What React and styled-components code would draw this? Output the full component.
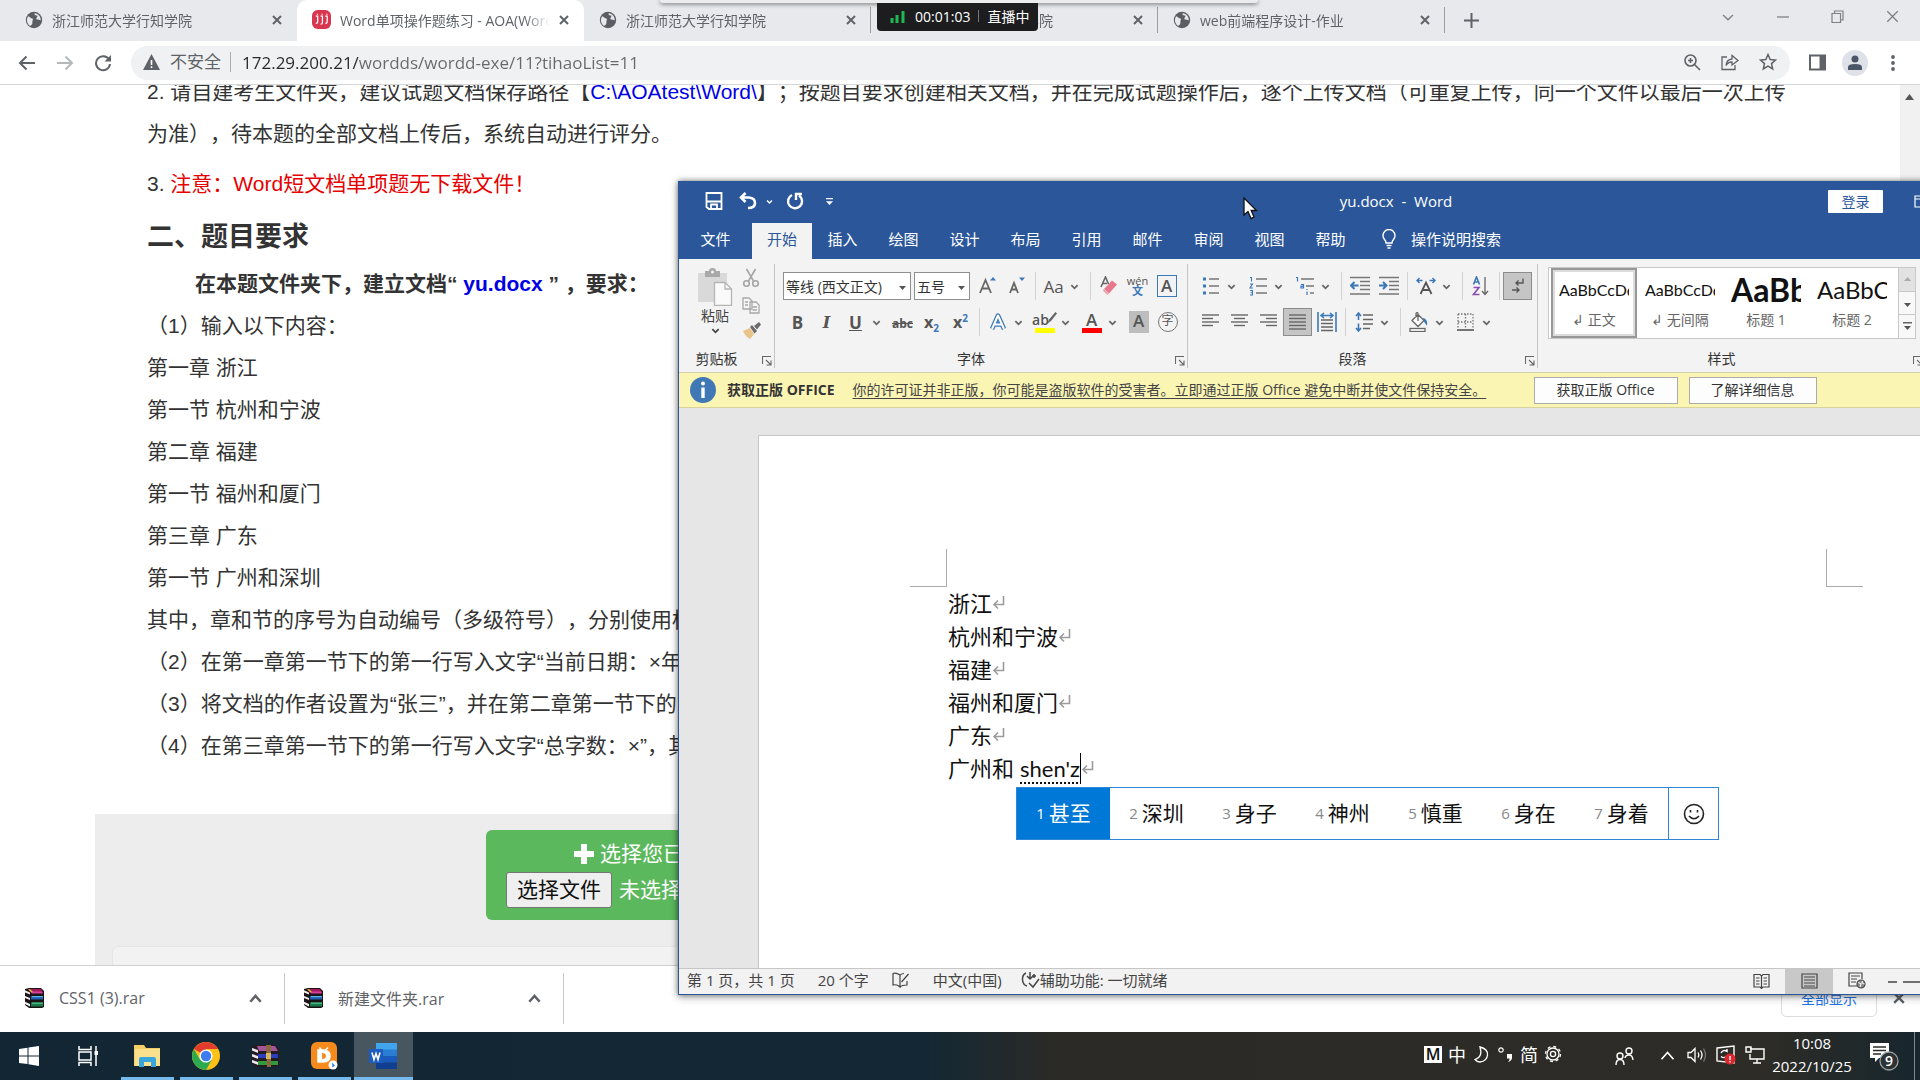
import React, { useState } from 'react'
import styled, { createGlobalStyle, css } from 'styled-components'

const uiFont = `'Open Sans', 'Noto Sans CJK SC', sans-serif`
const pageFont = `'Liberation Sans', 'Noto Sans CJK SC', sans-serif`
const docFont = `Lato, 'Noto Sans CJK SC', sans-serif`

const GlobalStyle = createGlobalStyle`
    * {
        box-sizing: border-box;
    }
    body {
        margin: 0;
        overflow: hidden;
        font-family: ${uiFont};
        text-spacing-trim: space-all;
    }
    button, input, select {
        font: inherit;
        color: inherit;
        margin: 0;
        padding: 0;
        border: 0;
        background: none;
    }
    svg {
        display: block;
        flex: none;
    }
    p, h2 {
        margin: 0;
    }
`

const Desktop = styled.div`
    position: relative;
    height: 100vh;
    display: flex;
    flex-direction: column;
    overflow: hidden;
    background: #fff;
`

/* ---------- browser ---------- */

const TabStrip = styled.div`
    height: 41px;
    flex: none;
    display: flex;
    align-items: stretch;
    padding-left: 10px;
    background: #e8e9ed;
`

const Tab = styled.div`
    width: 287px;
    display: flex;
    align-items: center;
    gap: 9px;
    padding: 0 14px 2px 15px;
    font-size: 14px;
    color: #5f6368;
    border-right: 1px solid ${p => (p.$line ? '#9a9da1' : 'transparent')};
    border-image: ${p => (p.$line ? 'linear-gradient(transparent 8px, #9a9da1 8px, #9a9da1 32px, transparent 32px) 1' : 'none')};
    ${p => p.$active && css`
        background: #fff;
        border-radius: 10px 10px 0 0;
    `}
`

const TabTitle = styled.button`
    flex: 1;
    min-width: 0;
    overflow: hidden;
    text-align: left;
    white-space: nowrap;
    mask-image: linear-gradient(to right, #000 88%, transparent);
`

const IconButton = styled.button`
    display: flex;
    align-items: center;
    justify-content: center;
    flex: none;
    width: ${p => p.$w || 'auto'};
    color: #5f6368;
`

const WindowControls = styled.div`
    margin-left: auto;
    display: flex;
    padding: 0 0 8px;
    & > button {
        color: #7d8084;
    }
`

const Toolbar = styled.div`
    height: 44px;
    flex: none;
    display: flex;
    align-items: center;
    padding: 0 8px;
    border-bottom: 1px solid #d5d6d8;
    background: #fff;
`

const Omnibox = styled.div`
    flex: 1;
    height: 34px;
    display: flex;
    align-items: center;
    margin: 0 8px 0 9px;
    padding: 0 3px 1px 12px;
    border-radius: 17px;
    background: #eff1f2;
    font-size: 17px;
    color: #5f6368;
`

const NotSecure = styled.span`
    margin-left: 10px;
    padding-right: 9px;
    line-height: 20px;
    border-right: 1px solid #a9acb0;
`

const Address = styled.input`
    flex: 1;
    margin-left: 11px;
    outline: 0;
    color: #333;
    background: linear-gradient(to right, #26282b 117px, #65696d 117px);
    background-clip: text;
    -webkit-text-fill-color: transparent;
`

const Avatar = styled.span`
    width: 26px;
    height: 26px;
    display: flex;
    align-items: center;
    justify-content: center;
    border-radius: 50%;
    background: #dfe1e8;
`

const Viewport = styled.main`
    flex: 1;
    min-height: 0;
    display: flex;
    overflow: hidden;
`

const Page = styled.div`
    flex: 1;
    padding: 0 95px;
    font-family: ${pageFont};
    font-size: 21px;
    line-height: 42px;
    color: #333;
`

const Article = styled.article`
    margin-top: -14px;
    padding: 0 16px 0 52px;
`

const Para = styled.p`
    margin-bottom: ${p => (p.$spaced ? '8px' : 0)};
`

const Heading = styled.h2`
    margin: 11px 0 5px;
    font-size: 27px;
    line-height: 42px;
`

const Lead = styled.p`
    padding-left: 48px;
    font-weight: bold;
`

const Blue = styled.span`
    color: #0000e6;
`

const Red = styled.span`
    color: #e60000;
`

const UploadPanel = styled.section`
    margin-top: 47px;
    padding: 16px 17px 0;
    background: #ededed;
    line-height: 36px;
`

const UploadBox = styled.div`
    width: 480px;
    margin: 0 0 26px 374px;
    padding: 6px 20px 12px;
    border-radius: 6px;
    background: #5cb85c;
    color: #fff;
`

const UploadTitle = styled.div`
    display: flex;
    align-items: center;
    gap: 6px;
    padding-left: 68px;
    white-space: nowrap;
`

const UploadRow = styled.div`
    display: flex;
    align-items: center;
    gap: 7px;
    white-space: nowrap;
`

const FileButton = styled.button`
    height: 36px;
    padding: 0 10px;
    line-height: 32px;
    border: 1px solid #767676;
    border-radius: 3px;
    background: #efefef;
    color: #111;
`

const UploadList = styled.div`
    height: 60px;
    border: 1px solid #e6e6e6;
    border-radius: 6px;
    background: #f2f2f2;
`

const Scrollbar = styled.div`
    width: 20px;
    padding-top: 8px;
    background: #f1f1f1;
    display: flex;
    justify-content: center;
`

const DownloadBar = styled.div`
    height: 67px;
    flex: none;
    display: flex;
    align-items: center;
    padding-bottom: 2px;
    border-top: 1px solid #cfd0d2;
    background: #fff;
`

const Download = styled.div`
    height: 51px;
    width: ${p => p.$w};
    display: flex;
    align-items: center;
    gap: 15px;
    padding: 0 22px 0 ${p => p.$pad};
    border-right: 1px solid #c9cbce;
    font-size: 16px;
    color: #5f6368;
`

const DownloadName = styled.button`
    flex: 1;
    text-align: left;
`

const ShowAll = styled.button`
    height: 38px;
    margin-left: auto;
    padding: 0 19px;
    border: 1px solid #dadce0;
    border-radius: 5px;
    font-size: 14px;
    color: #1a73e8;
`

/* ---------- recording strip ---------- */

const ShareStrip = styled.div`
    position: absolute;
    top: 0;
    left: 660px;
    width: 598px;
    height: 3px;
    border-radius: 0 0 4px 4px;
    background: #ececee;
    box-shadow: 0 1px 4px rgba(0, 0, 0, 0.6);
`

const LivePill = styled.div`
    position: absolute;
    top: 3px;
    left: 877px;
    height: 28px;
    display: flex;
    align-items: center;
    gap: 8px;
    padding: 0 9px 2px 13px;
    border-radius: 0 0 4px 4px;
    background: #1d1d1f;
    color: #fff;
    font-size: 14px;
    & > i {
        width: 1px;
        height: 12px;
        background: #777;
    }
`

/* ---------- word window ---------- */

const WordWindow = styled.section`
    position: absolute;
    top: 181px;
    bottom: 85px;
    left: 678px;
    right: -8px;
    display: flex;
    flex-direction: column;
    border: 1px solid #2b579a;
    background: #e6e6e6;
    box-shadow: 0 0 6px rgba(0, 0, 0, 0.55), 0 4px 8px rgba(0, 0, 0, 0.15);
    font-size: 14px;
    color: #444;
`

const TitleBar = styled.div`
    height: 41px;
    flex: none;
    display: flex;
    align-items: center;
    padding: 0 0 3px 20px;
    background: #2b579a;
    color: #fff;
`

const QuickAccess = styled.div`
    display: flex;
    align-items: center;
    & > button {
        height: 30px;
        color: #fff;
    }
`

const WindowTitle = styled.div`
    flex: 1;
    padding-left: 122px;
    text-align: center;
    font-size: 15px;
    white-space: pre;
`

const SignIn = styled.button`
    height: 23px;
    width: 55px;
    margin-right: 31px;
    border-radius: 1px;
    background: #fff;
    color: #2b579a;
`

const RibbonTabs = styled.div`
    height: 36px;
    flex: none;
    display: flex;
    background: #2b579a;
    color: #fff;
    font-size: 15px;
`

const RibbonTab = styled.button`
    width: ${p => p.$w || '61px'};
    padding-bottom: 6px;
    ${p => p.$active && css`
        background: #f3f3f3;
        color: #2b579a;
    `}
`

const TellMe = styled.button`
    display: flex;
    align-items: center;
    gap: 14px;
    margin-left: 20px;
    padding-bottom: 5px;
`

const Ribbon = styled.div`
    flex: none;
    display: flex;
    padding: 5px 0 4px;
    border-bottom: 1px solid #d2d0a8;
    background: #f3f3f3;
    overflow: hidden;
`

const Group = styled.div`
    flex: none;
    width: ${p => p.$w};
    display: flex;
    flex-direction: column;
    padding-top: ${p => (p.$high ? '3px' : '4px')};
    border-right: 1px solid #c4c4c4;
`

const ToolRow = styled.div`
    height: 36px;
    display: flex;
    align-items: center;
    padding-left: 8px;
`

const GroupFoot = styled.div`
    margin-top: auto;
    height: 24px;
    display: flex;
    align-items: center;
    padding-right: 2px;
    & > span {
        flex: 1;
        padding: 4px 8px 0 0;
        text-align: center;
        color: #333;
    }
    & > button {
        padding-top: 9px;
    }
`

const Tool = styled.button`
    width: 29px;
    height: 28px;
    flex: none;
    display: flex;
    align-items: center;
    justify-content: center;
    font-size: 17px;
    color: #555;
    ${p => p.$on && css`
        background: #c5c5c5;
        border: 1px solid #8c8c8c;
    `}
`

const Drop = styled.button`
    width: 18px;
    height: 28px;
    flex: none;
    display: flex;
    align-items: center;
    padding-left: 2px;
    color: #666;
`

const Rule = styled.span`
    width: 8px;
    height: 28px;
    flex: none;
    background: linear-gradient(#d2d2d2, #d2d2d2) center / 1px 100% no-repeat;
`

const SelectBox = styled.label`
    width: ${p => p.$w};
    height: 28px;
    margin-right: 3px;
    flex: none;
    display: flex;
    align-items: center;
    border: 1px solid #8f8f8f;
    background: #fff;
    & > select {
        flex: 1;
        min-width: 0;
        height: 26px;
        padding-left: 2px;
        appearance: none;
        outline: 0;
        color: #333;
    }
    & > svg {
        margin: 0 3px;
    }
`

const Clipboard = styled.div`
    display: flex;
    justify-content: space-between;
    height: 76px;
    padding: 0 12px 0 18px;
`

const Paste = styled.button`
    display: flex;
    flex-direction: column;
    align-items: center;
    width: 36px;
    line-height: 20px;
    color: #444;
`

const ClipTools = styled.div`
    display: flex;
    flex-direction: column;
    justify-content: space-between;
    padding: 0 0 4px;
`

const Gallery = styled.div`
    display: flex;
    width: 368px;
    height: 72px;
    margin-left: 10px;
    padding-left: 2px;
    border: 1px solid #c8c8c8;
    background: #fff;
`

const StyleItem = styled.button`
    width: 86px;
    display: flex;
    flex-direction: column;
    align-items: center;
    justify-content: flex-end;
    padding-bottom: 6px;
    line-height: 20px;
    color: #666;
    border: 2px solid transparent;
    ${p => p.$on && css`
        border-color: #989898;
        box-shadow: inset 0 0 0 2px #dcdcdc;
    `}
`

const Sample = styled.span`
    width: 70px;
    height: 40px;
    overflow: hidden;
    text-align: left;
    white-space: nowrap;
    font-family: ${docFont};
    font-size: ${p => p.$size};
    font-weight: ${p => (p.$bold ? 'bold' : 'normal')};
    line-height: 40px;
    color: #111;
`

const GalleryScroll = styled.div`
    margin-left: auto;
    width: 17px;
    display: flex;
    flex-direction: column;
    border-left: 1px solid #c8c8c8;
    background: #f8f8f8;
    & > button {
        flex: 1;
        display: flex;
        align-items: center;
        justify-content: center;
    }
    & > button + button {
        border-top: 1px solid #c8c8c8;
    }
    & > button:first-child {
        background: #e2e2e2;
    }
`

const LicenseBar = styled.div`
    height: 35px;
    flex: none;
    display: flex;
    align-items: center;
    padding-left: 11px;
    border-bottom: 1px solid #d8d39a;
    background: #fbf5b4;
    color: #333;
    white-space: nowrap;
    & > strong {
        margin: 0 18px 0 11px;
    }
    & > a {
        width: 681px;
        color: #444;
        text-underline-offset: 3px;
    }
    & > strong, & > a {
        padding-bottom: 2px;
    }
`

const LicenseButton = styled.button`
    height: 27px;
    width: ${p => p.$w};
    margin-right: 11px;
    padding-bottom: 2px;
    border: 1px solid #ababab;
    background: #fdfdfd;
`

const DocArea = styled.div`
    flex: 1;
    min-height: 0;
    padding: 27px 0 0 79px;
    background: #e6e6e6;
`

const Sheet = styled.div`
    height: 100%;
    padding: 113px 64px 0 151px;
    border-top: 1px solid #c6c6c6;
    border-left: 1px solid #c6c6c6;
    background: #fff;
`

const MarginMarks = styled.div`
    display: flex;
    justify-content: space-between;
    height: 38px;
`

const Mark = styled.span`
    width: 37px;
    border-bottom: 1px solid #ababab;
    ${p => (p.$left ? 'border-right' : 'border-left')}: 1px solid #ababab;
`

const DocText = styled.div`
    padding-left: 38px;
    font-family: ${docFont};
    font-size: 22px;
    line-height: 33px;
    color: #111;
    & > p {
        display: flex;
        align-items: center;
    }
`

const Composing = styled.span`
    position: relative;
    margin-left: 6px;
    height: 31px;
    line-height: 31px;
    border-right: 1px solid #000;
    & > u {
        text-decoration: underline dotted;
        text-decoration-thickness: 2px;
        text-underline-offset: 5px;
    }
`

const ImePanel = styled.div`
    position: absolute;
    top: 34px;
    left: -4px;
    height: 53px;
    display: flex;
    border: 1px solid #2f86d6;
    background: #fff;
    font-family: ${uiFont};
    line-height: 51px;
`

const Candidate = styled.button`
    width: 93px;
    display: flex;
    align-items: center;
    justify-content: center;
    gap: 4px;
    font-size: 21px;
    & > small {
        font-size: 15px;
        color: #888;
    }
    ${p => p.$on && css`
        background: #0078d7;
        color: #fff;
        & > small {
            color: #fff;
        }
    `}
`

const Emoji = styled.button`
    width: 50px;
    display: flex;
    align-items: center;
    justify-content: center;
    border-left: 1px solid #2f86d6;
`

const StatusBar = styled.div`
    height: 26px;
    flex: none;
    display: flex;
    align-items: center;
    padding-left: 8px;
    border-top: 1px solid #c6c6c6;
    background: #f2f2f2;
    font-size: 15px;
    line-height: 20px;
    white-space: pre;
    & > span {
        margin-right: 23px;
        padding-bottom: 3px;
    }
`

const Accessibility = styled.button`
    display: flex;
    align-items: center;
    margin: 0 auto 0 -4px;
    padding-bottom: 3px;
`

const ViewButton = styled.button`
    width: 48px;
    height: 25px;
    display: flex;
    align-items: center;
    justify-content: center;
    padding-bottom: 2px;
    background: ${p => (p.$on ? '#c8c8c8' : 'none')};
`

const Pointer = styled.svg`
    position: absolute;
    top: 197px;
    left: 1243px;
`

/* ---------- taskbar ---------- */

const Taskbar = styled.footer`
    height: 48px;
    flex: none;
    display: flex;
    align-items: stretch;
    background: linear-gradient(to right, #122733 0, #132834 48%, #2b2a27 55%, #2c2b27 70%, #2d2c27 92%, #17262d 100%);
    color: #fff;
`

const TaskButton = styled.button`
    width: 59px;
    display: flex;
    align-items: center;
    justify-content: center;
    padding: 3px 2px 0 0;
    border-bottom: 3px solid transparent;
    ${p => p.$open && css`
        border-image: linear-gradient(to right, transparent 6px, #76b9ed 6px, #76b9ed 53px, transparent 53px) 3;
    `}
    ${p => p.$active && css`
        background: #47565f;
        border-bottom-color: #76b9ed;
    `}
`

const TrayGroup = styled.div`
    display: flex;
    align-items: center;
    font-size: 18px;
    & > button {
        width: ${p => p.$cell};
        display: flex;
        justify-content: center;
        padding-bottom: 2px;
    }
`

const ImeTray = styled(TrayGroup)`
    margin: 0 38px 0 auto;
    padding-bottom: 2px;
`

const ModeBadge = styled.span`
    width: 18px;
    height: 17px;
    line-height: 17px;
    background: #fff;
    color: #111;
    font-size: 16px;
    font-weight: 600;
    text-align: center;
`

const People = styled.button`
    width: 42px;
    margin-right: 8px;
    display: flex;
    align-items: center;
    justify-content: center;
`

const Clock = styled.button`
    width: 86px;
    padding-bottom: 2px;
    font-size: 15px;
    line-height: 23px;
    text-align: center;
`

const Notify = styled.button`
    width: 60px;
    margin-right: 5px;
    display: flex;
    align-items: center;
    justify-content: center;
    border-right: 1px solid #7b858a;
`

/* ---------- icons ---------- */

const Svg = ({ s = 20, w, h, vb, children, ...rest }) => (
    <svg width={w || s} height={h || s} viewBox={vb || `0 0 ${w || s} ${h || s}`} fill="none" stroke="currentColor" strokeWidth="2" aria-hidden="true" {...rest}>{children}</svg>
)

const Globe = () => (
    <Svg s={18} stroke="none">
        <circle cx="9" cy="9" r="8.2" fill="#5a5e63" />
        <path d="M3 5.2C5 5.6 5.4 7.4 7.6 7.6C8.6 8.8 7 10 7.4 11.4C7.8 13 5.8 14.6 5 15C2.6 13.4 1.6 10.4 2 8ZM9.6 2.2C9 4 10.6 4.6 12.4 4.6C12.8 6.4 11 6.6 11.4 8.2C13 9 14.6 8.4 15.8 9.6C16 6 13.6 2.6 9.6 2.2Z" fill="#e8e9ed" />
    </Svg>
)
const SiteLogo = () => (
    <Svg w={19} h={19} vb="0 0 20 20" stroke="#fff" strokeWidth="1.3">
        <rect width="20" height="20" rx="6" fill="#d9364f" stroke="none" />
        <path d="M4 6.5h2v5.5q0 2-2 2M9 6.5h2v6.5q0 2-2 2M14 6.5h2v5.5q0 2-2 2M5.6 4v1M10.6 4v1M15.6 4v1" />
    </Svg>
)
const Cross = ({ s = 10, ...rest }) => <Svg s={s} vb="0 0 10 10" {...rest}><path d="M1 1L9 9M9 1L1 9" /></Svg>
const Chevron = ({ s = 9, up, ...rest }) => (
    <Svg w={s} h={s} vb="0 0 10 10" {...rest}><path d={up ? 'M1 7.5L5 3L9 7.5' : 'M1.5 3.5L5 7L8.5 3.5'} /></Svg>
)
const Caret = ({ up, line }) => (
    <Svg w={9} h={9} stroke="none" fill="#666">
        <path d={up ? 'M1 6H8L4.5 2Z' : 'M1 4H8L4.5 8Z'} fill={up ? '#aaa' : '#555'} />
        {line && <path d="M0 0H9V1.5H0Z" />}
    </Svg>
)
const Arrow = ({ right, ...rest }) => (
    <Svg s={18} {...rest}><path d={right ? 'M1 9H16M9.5 2.5L16 9L9.5 15.5' : 'M17 9H2M8.5 2.5L2 9L8.5 15.5'} /></Svg>
)
const Rar = ({ s = 20 }) => (
    <Svg s={s} vb="0 0 20 20" stroke="none">
        <path d="M1 1L5 0H17L20 3V19L18 20H5L1 17Z" fill="#1b1416" />
        <path d="M6 1H17L19 5H7Z" fill="#a3175f" />
        <path d="M7 3.4H18L19 5.6H8Z" fill="#d6409a" />
        <path d="M7 8H19V11.5H7Z" fill="#1f5fae" />
        <path d="M8 8H19V9.2H8Z" fill="#5fb3e8" />
        <path d="M7 14.5H19V18.5H7Z" fill="#1a7a4a" />
        <path d="M8 14.5H19V15.8H8Z" fill="#4fc38a" />
        <path d="M1 2.2L6 4.4V6.4L1 4.4ZM1 8L6 10V12L1 10ZM1 13.8L6 16V18.4L1 16Z" fill="#f4eef0" />
        <path d="M4 1.4L6 1L9 4L7.4 4.6Z" fill="#e0b73e" />
    </Svg>
)
const Return = ({ color = '#9b9b9b' }) => (
    <Svg w={13} h={18} stroke={color} strokeWidth="1.6"><path d="M11.5 1V9.5H2.5M6 5.5L2 9.5L6 13.5" /></Svg>
)
const Lines = ({ rows }) => (
    <Svg s={18} stroke="#666" strokeWidth="1.4">
        {rows.map(([a, b], i) => <path key={i} d={`M${a} ${2 + i * 3.5}H${b}`} />)}
    </Svg>
)
const left = [[0, 17], [0, 11], [0, 17], [0, 11]]
const center = [[0, 17], [3, 14], [0, 17], [3, 14]]
const right = [[0, 17], [6, 17], [0, 17], [6, 17]]
const full = [[0, 17], [0, 17], [0, 17], [0, 17], [0, 17]]

const blue = '#3a78b8'

const Bullets = () => (
    <Svg w={18} h={20} stroke="#777" strokeWidth="1.4">
        <path d="M7 3H17M7 10H17M7 17H17" />
        <path d="M1 3H4M1 10H4M1 17H4" stroke={blue} strokeWidth="3" />
    </Svg>
)
const Numbers = () => (
    <Svg w={18} h={20} stroke="#777" strokeWidth="1.4">
        <path d="M7 3H18M7 10H18M7 17H18" />
        <path d="M1 1.5H2.5V5.5M1 8H3.5L1 12H4M1 14.5H3.5V19H1M1.5 16.8H3.5" stroke={blue} strokeWidth="1.1" />
    </Svg>
)
const Multi = () => (
    <Svg w={20} h={20} stroke="#777" strokeWidth="1.4">
        <path d="M6 3H19M11 10H19M15 17H19" />
        <path d="M1 1.5H2.5V5.5M6 8.5H8.5V12H6V10.2H8.5M12 15.5V19M12 13V14" stroke={blue} strokeWidth="1.2" />
    </Svg>
)
const Indent = ({ out }) => (
    <Svg w={20} h={20} stroke="#777" strokeWidth="1.4">
        <path d="M0 1.5H20M10 5.5H20M10 9.5H20M10 13.5H20M0 18H20" />
        <path d={out ? 'M8.5 9.5H1.5M4.5 6L1 9.5L4.5 13' : 'M0 9.5H7M4 6L7.5 9.5L4 13'} stroke={blue} strokeWidth="2" />
    </Svg>
)
const AsianLayout = () => (
    <Svg w={20} h={18} stroke="#555" strokeWidth="1.8">
        <path d="M4.5 17L10 5.5L15.5 17M6.5 13H13.5" />
        <path d="M6.5 3.5H1M3.5 1L1 3.5L3.5 6M13.5 3.5H19M16.5 1L19 3.5L16.5 6" stroke={blue} strokeWidth="1.4" />
    </Svg>
)
const SortIcon = () => (
    <Svg w={18} h={20} strokeWidth="1.6">
        <path d="M1.5 8.5L4.5 1L7.5 8.5M2.5 6H6.5" stroke={blue} />
        <path d="M1.5 11.5H7L1.5 18.5H7.5" stroke="#8a4fb0" />
        <path d="M13 1V18M10 15L13 18.5L16 15" stroke="#666" strokeWidth="1.3" />
    </Svg>
)
const MarksIcon = () => (
    <Svg w={16} h={20} stroke="#555" strokeWidth="1.4">
        <path d="M13 2.5V7H6M8.5 4.5L6 7L8.5 9.5M2 14H9M6.5 11.5L9 14L6.5 16.5" />
    </Svg>
)
const Distribute = () => (
    <Svg w={20} h={22} stroke="#666" strokeWidth="1.4">
        <path d="M4 9H16M4 12.5H16M4 16H16M4 19.5H16" />
        <path d="M1 1V21M19 1V21M4 4.5H16M7 2L4 4.5L7 7M13 2L16 4.5L13 7" stroke={blue} strokeWidth="1.6" />
    </Svg>
)
const Spacing = () => (
    <Svg w={18} h={20} stroke="#666" strokeWidth="1.4">
        <path d="M8 3H18M8 7.5H18M8 12H18M8 16.5H15" />
        <path d="M3.5 1.5V8M1 4L3.5 1L6 4M3.5 11.5V18.5M1 16L3.5 19L6 16" stroke={blue} strokeWidth="1.6" />
    </Svg>
)
const Bucket = () => (
    <Svg w={20} h={20} stroke="#666" strokeWidth="1.3">
        <path d="M3 8.5L9 2.5L15 8.5L9 14.5ZM9 9V1.5Q9 .6 8 .6T7 2V5" fill="#fafafa" />
        <path d="M14 6Q19 7 18 13.5Q15.5 11 14.5 8.5Z" fill={blue} stroke="none" />
        <rect x="1" y="16.5" width="15" height="3" fill="#fff" />
    </Svg>
)
const Borders = () => (
    <Svg w={17} h={18} stroke="#777" strokeWidth="1.3">
        <path d="M1 1H16M1 9H16M1 1V16M8.5 1V16M16 1V16" strokeDasharray="1.5 1.5" />
        <path d="M0 17H17" stroke="#555" strokeWidth="1.6" />
    </Svg>
)
const Grow = ({ down }) => (
    <Svg w={18} h={20} stroke="#666" strokeWidth="1.8">
        <path d={down ? 'M2 17L6 7L10 17M3.5 13.5H8.5' : 'M1 17L6.5 4L12 17M3 12.5H10'} />
        <path d={down ? 'M11 1.5H17L14 5Z' : 'M11 4.5H17L14 1Z'} fill={blue} stroke="none" />
    </Svg>
)
const Eraser = () => (
    <Svg w={20} h={20} stroke="#666" strokeWidth="1.6">
        <path d="M2 11L6.5 1L9.5 8M3.5 7.5H8" />
        <path d="M5 13L13 4.5L18 8.5L10 17.5Z" fill="#e8798c" stroke="none" />
        <path d="M4.3 13.8L9.2 18.4" stroke="#e8a0ac" />
    </Svg>
)
const Highlighter = () => (
    <Svg w={20} h={12} stroke="none"><path d="M18.5 0L20 1.5L14 9L10.5 11.5L12 7.5Z" fill="#666" /></Svg>
)
const Launcher = () => (
    <Svg s={10} stroke="#666" strokeWidth="1.1"><path d="M.5 8V.5H9M4 4L8.5 8.5M9 4.5V9H4.5" /></Svg>
)
const Scissors = () => (
    <Svg w={18} h={20} stroke="#a5a5a5" strokeWidth="1.6">
        <path d="M4.5 1L11.5 13M13.5 1L6.5 13" /><circle cx="4.5" cy="15.5" r="2.8" /><circle cx="13.5" cy="15.5" r="2.8" />
    </Svg>
)
const CopyIcon = () => (
    <Svg w={18} h={17} stroke="#a8a8a8" strokeWidth="1.3" fill="#f6f6f6">
        <path d="M1 1H7L10 4V12H1ZM8 5H14L17 8V16H8Z" /><path d="M3 5H6M3 8H6M10.5 10H15M10.5 13H15" />
    </Svg>
)
const Brush = () => (
    <Svg w={20} h={18} stroke="none">
        <path d="M1 9L8 6L12 12L8 17Q3 14 1 9Z" fill="#eac38a" />
        <path d="M8 5L10 3L15 9L12.5 11.5ZM12 4L17 0L19 2.5L15 7.5Z" fill="#6b6b6b" />
    </Svg>
)
const PasteIcon = () => (
    <Svg w={36} h={38} stroke="none">
        <path d="M1 5H30V34H1Z" fill="#d9d9d9" />
        <path d="M8 3H12Q12 0 15.5 0T19 3H23V9H8Z" fill="#a9a9a9" /><circle cx="15.5" cy="4" r="1.5" fill="#f3f3f3" />
        <path d="M17.5 14.5H28L34.5 21V37.5H17.5Z" fill="#fafafa" stroke="#b5b5b5" strokeWidth="1.3" /><path d="M28 14.5V21H34.5" stroke="#b5b5b5" strokeWidth="1.3" />
    </Svg>
)
const TextEffect = () => (
    <Svg w={20} h={20} stroke={blue} strokeWidth="4.5" strokeLinejoin="round">
        <path d="M4 17L10 3.5L16 17M6.5 12.5H13.5" /><path d="M4 17L10 3.5L16 17M6.5 12.5H13.5" stroke="#fff" strokeWidth="2" />
    </Svg>
)

const PhoneticGuide = styled.span`
    display: flex;
    flex-direction: column;
    align-items: center;
    font-size: 11px;
    line-height: 10px;
    & > b {
        color: #3a78b8;
    }
`

const Boxed = styled.span`
    width: 20px;
    height: 22px;
    line-height: 19px;
    font-weight: 600;
    border: ${p => (p.$fill ? '0' : '1px solid #3a78b8')};
    background: ${p => (p.$fill ? '#bdbdbd' : 'none')};
`

const Circled = styled.span`
    width: 20px;
    height: 20px;
    border: 1px solid #777;
    border-radius: 50%;
    font-size: 12px;
    line-height: 16px;
`

const Marked = styled.span`
    width: 20px;
    height: 21px;
    display: flex;
    justify-content: center;
    font-size: ${p => p.$size || '17px'};
    font-weight: 600;
    line-height: 15px;
    border-bottom: 5px solid ${p => p.$color};
    & > svg {
        margin-left: -12px;
    }
`

const Italic = styled.i`
    font-family: 'DejaVu Serif', serif;
    font-size: 16px;
    font-weight: bold;
`

const Script = styled.span`
    font-size: 16px;
    font-weight: bold;
    & > s {
        font-size: 12px;
    }
    & > sub, & > sup {
        font-size: 10px;
        line-height: 0;
        color: #3a78b8;
    }
`

/* ---------- data ---------- */

const tabs = [
    { title: '浙江师范大学行知学院' },
    { title: 'Word单项操作题练习 - AOA(Word)', active: true },
    { title: '浙江师范大学行知学院', line: true },
    { title: '浙江师范大学行知学院', line: true },
    { title: 'web前端程序设计-作业', line: true },
]

const lines = [
    '（1）输入以下内容：',
    '第一章 浙江',
    '第一节 杭州和宁波',
    '第二章 福建',
    '第一节 福州和厦门',
    '第三章 广东',
    '第一节 广州和深圳',
    '其中，章和节的序号为自动编号（多级符号），分别使用标题1',
    '（2）在第一章第一节下的第一行写入文字“当前日期：×年×月',
    '（3）将文档的作者设置为“张三”，并在第二章第一节下的第一行',
    '（4）在第三章第一节下的第一行写入文字“总字数：×”，其中',
]

const ribbonTabs = ['插入', '绘图', '设计', '布局', '引用', '邮件', '审阅', '视图', '帮助']
const docLines = ['浙江', '杭州和宁波', '福建', '福州和厦门', '广东']
const candidates = ['甚至', '深圳', '身子', '神州', '慎重', '身在', '身着']
const styleItems = [
    { sample: 'AaBbCcDd', size: '16px', name: '↲ 正文' },
    { sample: 'AaBbCcDd', size: '16px', name: '↲ 无间隔' },
    { sample: 'AaBbC', size: '32px', name: '标题 1', bold: true },
    { sample: 'AaBbCc', size: '24px', name: '标题 2' },
]

function Browser() {
    const [url, setUrl] = useState('172.29.200.21/wordds/wordd-exe/11?tihaoList=11')

    return (
        <>
            <TabStrip>
                {tabs.map((t, i) => (
                    <Tab key={i} $active={t.active} $line={t.line}>
                        {t.active ? <SiteLogo /> : <Globe />}
                        <TabTitle>{t.title}</TabTitle>
                        <IconButton aria-label="关闭标签页"><Cross /></IconButton>
                    </Tab>
                ))}
                <IconButton $w="52px" aria-label="新标签页"><Svg s={15}><path d="M7.5 0V15M0 7.5H15" /></Svg></IconButton>
                <WindowControls>
                    <IconButton $w="55px" aria-label="搜索标签页"><Chevron s={14} strokeWidth="1" /></IconButton>
                    <IconButton $w="55px" aria-label="最小化"><Svg s={12} strokeWidth="1.3"><path d="M0 6H12" /></Svg></IconButton>
                    <IconButton $w="55px" aria-label="还原"><Svg s={13} strokeWidth="1.2"><path d="M1 3.5H9.5V12.5H1ZM3.5 3.5V1H12V10H9.5" /></Svg></IconButton>
                    <IconButton $w="55px" aria-label="关闭"><Cross s={13} strokeWidth="1" /></IconButton>
                </WindowControls>
            </TabStrip>
            <Toolbar>
                <IconButton $w="38px" aria-label="后退"><Arrow /></IconButton>
                <IconButton $w="38px" aria-label="前进"><Arrow right stroke="#b5b8bb" /></IconButton>
                <IconButton $w="38px" aria-label="刷新">
                    <Svg s={18}><path d="M15 5.5A7 7 0 1 0 16 10" /><path d="M17 1V7.5H10.5Z" fill="currentColor" stroke="none" /></Svg>
                </IconButton>
                <Omnibox>
                    <Svg w={17} h={16} stroke="none"><path d="M8.5 0L17 16H0Z" fill="#5f6368" /><path d="M7.7 6H9.3V11H7.7ZM7.7 12.3H9.3V14H7.7Z" fill="#fff" /></Svg>
                    <NotSecure>不安全</NotSecure>
                    <Address aria-label="地址栏" value={url} onChange={(e) => setUrl(e.target.value)} />
                    <IconButton $w="38px" aria-label="缩放"><Svg s={17} strokeWidth="1.6"><circle cx="6.5" cy="6.5" r="5.5" /><path d="M10.5 10.5L16 16M6.5 4V9M4 6.5H9" /></Svg></IconButton>
                    <IconButton $w="38px" aria-label="分享"><Svg s={18} strokeWidth="1.3"><path d="M6 4H1V16.5H14V12M5 12.5Q5.5 6.5 11 6V2.5L17 7.5L11 12V9Q7 9 5 12.5Z" /></Svg></IconButton>
                    <IconButton $w="38px" aria-label="收藏"><Svg s={18} strokeWidth="1.5"><path d="M9 1.5L11.2 6.5L16.5 7L12.5 10.6L13.7 16L9 13.2L4.3 16L5.5 10.6L1.5 7L6.8 6.5Z" /></Svg></IconButton>
                </Omnibox>
                <IconButton $w="38px" aria-label="侧边栏"><Svg s={17}><rect x="1" y="1.5" width="15" height="14" /><path d="M13 2V15" strokeWidth="5" /></Svg></IconButton>
                <IconButton $w="38px" aria-label="个人资料"><Avatar><Svg s={16} stroke="none" fill="#4a5568"><circle cx="8" cy="4" r="3.5" /><path d="M1 15V12Q1 9 8 9T15 12V15Z" /></Svg></Avatar></IconButton>
                <IconButton $w="38px" aria-label="菜单"><Svg w={4} h={16} stroke="none" fill="currentColor"><circle cx="2" cy="2" r="1.9" /><circle cx="2" cy="8" r="1.9" /><circle cx="2" cy="14" r="1.9" /></Svg></IconButton>
            </Toolbar>
            <Viewport>
                <Page>
                    <Article>
                        <Para $spaced>2. 请自建考生文件夹，建议试题文档保存路径【<Blue>C:\AOAtest\Word\</Blue>】；按题目要求创建相关文档，并在完成试题操作后，逐个上传文档（可重复上传，同一个文件以最后一次上传为准），待本题的全部文档上传后，系统自动进行评分。</Para>
                        <Para>3. <Red>注意：Word短文档单项题无下载文件！</Red></Para>
                        <Heading>二、题目要求</Heading>
                        <Lead>在本题文件夹下，建立文档“ <Blue>yu.docx</Blue> ” ，要求：</Lead>
                        {lines.map((l) => <Para key={l}>{l}</Para>)}
                    </Article>
                    <UploadPanel>
                        <UploadBox>
                            <UploadTitle>
                                <Svg s={20} strokeWidth="6"><path d="M10 0V20M0 10H20" /></Svg>
                                选择您已
                            </UploadTitle>
                            <UploadRow><FileButton type="button">选择文件</FileButton>未选择</UploadRow>
                        </UploadBox>
                        <UploadList />
                    </UploadPanel>
                </Page>
                <Scrollbar><Svg w={10} h={8} stroke="none"><path d="M0 7H9L4.5 1Z" fill="#555" /></Svg></Scrollbar>
            </Viewport>
            <DownloadBar>
                <Download $w="285px" $pad="24px">
                    <Rar /><DownloadName>CSS1 (3).rar</DownloadName>
                    <IconButton aria-label="更多"><Chevron up s={13} /></IconButton>
                </Download>
                <Download $w="279px" $pad="18px">
                    <Rar /><DownloadName>新建文件夹.rar</DownloadName>
                    <IconButton aria-label="更多"><Chevron up s={13} /></IconButton>
                </Download>
                <ShowAll>全部显示</ShowAll>
                <IconButton $w="43px" aria-label="关闭下载栏"><Cross s={12} /></IconButton>
            </DownloadBar>
        </>
    )
}

function FontGroup() {
    return (
        <Group $w="413px">
            <ToolRow>
                <SelectBox $w="128px">
                    <select aria-label="字体" defaultValue="等线 (西文正文)"><option>等线 (西文正文)</option><option>宋体</option></select>
                    <Caret />
                </SelectBox>
                <SelectBox $w="56px">
                    <select aria-label="字号" defaultValue="五号"><option>五号</option><option>四号</option></select>
                    <Caret />
                </SelectBox>
                <Tool aria-label="增大字号"><Grow /></Tool>
                <Tool aria-label="减小字号"><Grow down /></Tool>
                <Rule />
                <Tool>Aa</Tool><Drop aria-label="更改大小写"><Chevron /></Drop>
                <Rule />
                <Tool aria-label="清除格式"><Eraser /></Tool>
                <Tool><PhoneticGuide>wén<b>文</b></PhoneticGuide></Tool>
                <Tool><Boxed>A</Boxed></Tool>
            </ToolRow>
            <ToolRow>
                <Tool><b>B</b></Tool>
                <Tool><Italic>I</Italic></Tool>
                <Tool><b><u>U</u></b></Tool><Drop aria-label="下划线"><Chevron /></Drop>
                <Tool><Script><s>abc</s></Script></Tool>
                <Tool><Script>x<sub>2</sub></Script></Tool>
                <Tool><Script>x<sup>2</sup></Script></Tool>
                <Rule />
                <Tool aria-label="文本效果"><TextEffect /></Tool><Drop aria-label="文本效果选项"><Chevron /></Drop>
                <Tool><Marked $size="14px" $color="#ffff00">ab<Highlighter /></Marked></Tool><Drop aria-label="突出显示"><Chevron /></Drop>
                <Tool><Marked $color="#ff0000">A</Marked></Tool><Drop aria-label="字体颜色"><Chevron /></Drop>
                <Tool><Boxed $fill>A</Boxed></Tool>
                <Tool><Circled>字</Circled></Tool>
            </ToolRow>
            <GroupFoot><span>字体</span><button aria-label="字体设置"><Launcher /></button></GroupFoot>
        </Group>
    )
}

function ParagraphGroup() {
    return (
        <Group $w="350px">
            <ToolRow>
                <Tool aria-label="项目符号"><Bullets /></Tool><Drop aria-label="项目符号库"><Chevron /></Drop>
                <Tool aria-label="编号"><Numbers /></Tool><Drop aria-label="编号库"><Chevron /></Drop>
                <Tool aria-label="多级列表"><Multi /></Tool><Drop aria-label="列表库"><Chevron /></Drop>
                <Rule />
                <Tool aria-label="减少缩进"><Indent out /></Tool>
                <Tool aria-label="增加缩进"><Indent /></Tool>
                <Rule />
                <Tool aria-label="中文版式"><AsianLayout /></Tool><Drop aria-label="版式选项"><Chevron /></Drop>
                <Rule />
                <Tool aria-label="排序"><SortIcon /></Tool>
                <Rule />
                <Tool $on aria-label="显示编辑标记"><MarksIcon /></Tool>
            </ToolRow>
            <ToolRow>
                <Tool aria-label="左对齐"><Lines rows={left} /></Tool>
                <Tool aria-label="居中"><Lines rows={center} /></Tool>
                <Tool aria-label="右对齐"><Lines rows={right} /></Tool>
                <Tool $on aria-label="两端对齐"><Lines rows={full} /></Tool>
                <Tool aria-label="分散对齐"><Distribute /></Tool>
                <Rule />
                <Tool aria-label="行距"><Spacing /></Tool><Drop aria-label="行距选项"><Chevron /></Drop>
                <Rule />
                <Tool aria-label="底纹"><Bucket /></Tool><Drop aria-label="底纹颜色"><Chevron /></Drop>
                <Tool aria-label="边框"><Borders /></Tool><Drop aria-label="边框选项"><Chevron /></Drop>
            </ToolRow>
            <GroupFoot><span>段落</span><button aria-label="段落设置"><Launcher /></button></GroupFoot>
        </Group>
    )
}

function Word() {
    return (
        <WordWindow>
            <TitleBar>
                <QuickAccess>
                    <IconButton $w="30px" aria-label="保存"><Svg s={18}><path d="M1.5 1H16.5V17H4L1.5 15ZM2 9.5H16M6 17V12.5H12V17" strokeWidth="1.8" /></Svg></IconButton>
                    <IconButton $w="37px" aria-label="撤消"><Svg w={18} h={18} strokeWidth="2.6"><path d="M6.5 1L2 5.5L6.5 10M2.5 5.5H10Q16 6 16 11T9 16" /></Svg></IconButton>
                    <IconButton $w="6px" aria-label="撤消选项"><Chevron s={7} /></IconButton>
                    <IconButton $w="46px" aria-label="重复"><Svg w={18} h={18} strokeWidth="2.4"><path d="M6 3A7 7 0 1 0 13 3.5M10 8V2H16" /></Svg></IconButton>
                    <IconButton $w="24px" aria-label="自定义"><Svg w={8} h={9} stroke="none" fill="#fff"><path d="M0 1H7V2.3H0ZM0 4.3H7L3.5 8Z" /></Svg></IconButton>
                </QuickAccess>
                <WindowTitle>yu.docx  -  Word</WindowTitle>
                <SignIn>登录</SignIn>
                <Svg w={13} h={13} strokeWidth="1.2"><path d="M1 1H12V12H1ZM1 4H12" /></Svg>
            </TitleBar>
            <RibbonTabs>
                <RibbonTab $w="73px">文件</RibbonTab>
                <RibbonTab $w="60px" $active>开始</RibbonTab>
                {ribbonTabs.map((t) => <RibbonTab key={t}>{t}</RibbonTab>)}
                <TellMe>
                    <Svg w={16} h={20} strokeWidth="1.4"><path d="M5 14Q5 12 3.5 10.5A6 6 0 1 1 12.5 10.5Q11 12 11 14ZM5.5 16.5H10.5M6.5 19H9.5" /></Svg>
                    操作说明搜索
                </TellMe>
            </RibbonTabs>
            <Ribbon>
                <Group $w="96px">
                    <Clipboard>
                        <Paste><PasteIcon />粘贴<Chevron /></Paste>
                        <ClipTools>
                            <button aria-label="剪切"><Scissors /></button>
                            <button aria-label="复制"><CopyIcon /></button>
                            <button aria-label="格式刷"><Brush /></button>
                        </ClipTools>
                    </Clipboard>
                    <GroupFoot><span>剪贴板</span><button aria-label="剪贴板设置"><Launcher /></button></GroupFoot>
                </Group>
                <FontGroup />
                <ParagraphGroup />
                <Group $w="388px" $high>
                    <Gallery>
                        {styleItems.map((s, i) => (
                            <StyleItem key={s.name} $on={i === 0}>
                                <Sample $size={s.size} $bold={s.bold}>{s.sample}</Sample>
                                {s.name}
                            </StyleItem>
                        ))}
                        <GalleryScroll>
                            <button aria-label="上一行"><Caret up /></button>
                            <button aria-label="下一行"><Caret /></button>
                            <button aria-label="其他"><Caret line /></button>
                        </GalleryScroll>
                    </Gallery>
                    <GroupFoot><span>样式</span><button aria-label="样式设置"><Launcher /></button></GroupFoot>
                </Group>
            </Ribbon>
            <LicenseBar>
                <Svg s={26} stroke="none"><circle cx="13" cy="13" r="13" fill="#3f78b5" /><circle cx="13" cy="6.5" r="2" fill="#fff" /><path d="M11.3 10.5H14.7V21H11.3Z" fill="#fff" /></Svg>
                <strong>获取正版 OFFICE</strong>
                <a href="#license">你的许可证并非正版，你可能是盗版软件的受害者。立即通过正版 Office 避免中断并使文件保持安全。</a>
                <LicenseButton $w="144px">获取正版 Office</LicenseButton>
                <LicenseButton $w="128px">了解详细信息</LicenseButton>
            </LicenseBar>
            <DocArea>
                <Sheet>
                    <MarginMarks><Mark $left /><Mark /></MarginMarks>
                    <DocText>
                        {docLines.map((l) => <p key={l}>{l}<Return /></p>)}
                        <p>
                            广州和
                            <Composing>
                                <u>shen'z</u>
                                <ImePanel>
                                    {candidates.map((c, i) => (
                                        <Candidate key={c} $on={i === 0}><small>{i + 1}</small>{c}</Candidate>
                                    ))}
                                    <Emoji aria-label="表情">
                                        <Svg s={22} strokeWidth="1.6" stroke="#222"><circle cx="11" cy="11" r="9.5" /><path d="M6 13Q11 18.5 16 13M7.5 7V9.5M14.5 7V9.5" /></Svg>
                                    </Emoji>
                                </ImePanel>
                            </Composing>
                            <Return />
                        </p>
                    </DocText>
                </Sheet>
            </DocArea>
            <StatusBar>
                <span>第 1 页，共 1 页</span>
                <span>20 个字</span>
                <span><Svg w={18} h={16} strokeWidth="1.2"><path d="M8 3Q4 .5 1 1.5V13Q5 12 8 15V3Q10 1.5 12 1.5M8 15Q10 13 15 13V9M9.5 10L16.5 2" /></Svg></span>
                <span>中文(中国)</span>
                <Accessibility>
                    <Svg w={19} h={18} strokeWidth="1.5"><path d="M5 2Q1 4 1.5 9T6 15M9 1V7M6 5L9 8L12 5M13 3V7M11 5H15M8 12L12 16L18 8" /></Svg>
                    辅助功能: 一切就绪
                </Accessibility>
                <ViewButton aria-label="阅读视图"><Svg w={17} h={16} strokeWidth="1.2"><path d="M1 1.5H7L8.5 3L10 1.5H16V14H10L8.5 15.5L7 14H1ZM8.5 3V15M3 5H6.5M3 8H6.5M3 11H6.5M10.5 5H14M10.5 8H14M10.5 11H14" /></Svg></ViewButton>
                <ViewButton $on aria-label="页面视图"><Svg w={17} h={16} strokeWidth="1.2"><path d="M1 1H16V15H1ZM3 4H14M3 7H14M3 10H14M3 13H14" /></Svg></ViewButton>
                <ViewButton aria-label="Web 版式"><Svg w={18} h={17} strokeWidth="1.2"><path d="M9 14H1V1H14V7M3 4H12M3 7H9M3 10H8" /><circle cx="13" cy="12" r="4" fill="#888" /><path d="M10.5 10.5L13 12L12 15M14.5 9L14 11L16.5 12" stroke="#eee" /></Svg></ViewButton>
                <Svg w={46} h={4} strokeWidth="1.5"><path d="M7 2H16M22 2H46" /></Svg>
            </StatusBar>
        </WordWindow>
    )
}

function App() {
    return (
        <Desktop>
            <GlobalStyle />
            <Browser />
            <Word />
            <ShareStrip />
            <LivePill>
                <Svg w={17} h={14} stroke="#1db954" strokeWidth="3"><path d="M2 14V9M7 14V6M13 14V2" /></Svg>
                <span>00:01:03</span><i /><span>直播中</span>
            </LivePill>
            <Pointer width="16" height="24" viewBox="0 0 16 24" fill="#fff" stroke="#111" strokeWidth="1.3">
                <path d="M1 1V18L5 14.5L8 21.5L11 20L8.2 13.5H13.5Z" />
            </Pointer>
            <Taskbar>
                <TaskButton aria-label="开始"><Svg s={20} stroke="none" fill="#fff"><path d="M0 3L8.5 1.8V9.4H0ZM9.5 1.6L20 0V9.4H9.5ZM0 10.5H8.5V18L0 17ZM9.5 10.5H20V20L9.5 18.3Z" /></Svg></TaskButton>
                <TaskButton aria-label="任务视图"><Svg w={20} h={20} strokeWidth="1.5"><path d="M1 0V3.5H13V0M1 20V16.5H13V20M1 6H13V14H1ZM18 0V5M18 9V20" /><path d="M16.5 5H20V9H16.5Z" fill="#fff" stroke="none" /></Svg></TaskButton>
                <TaskButton $open aria-label="文件资源管理器"><Svg w={26} h={24} stroke="none"><path d="M0 1H10L12 4H26V22H0Z" fill="#f3cf63" /><path d="M1 5H26V22H1Z" fill="#fbe08d" /><path d="M5 23V15Q5 13 7 13H20Q22 13 22 15V23H17V18H10V23Z" fill="#3aa7dc" /></Svg></TaskButton>
                <TaskButton $open aria-label="Chrome">
                    <Svg s={28} stroke="none">
                        <circle cx="14" cy="14" r="14" fill="#fbc116" />
                        <path d="M14 14L1.9 7A14 14 0 0 1 26.1 7H14Z" fill="#e33b2e" />
                        <path d="M1.9 7A14 14 0 0 0 14 28L20 17.5L14 14L8 17.5Z" fill="#2da94f" />
                        <circle cx="14" cy="14" r="6.6" fill="#fff" /><circle cx="14" cy="14" r="5.2" fill="#3b7ded" />
                    </Svg>
                </TaskButton>
                <TaskButton $open aria-label="WinRAR">
                    <Svg w={28} h={22} stroke="none">
                        <path d="M1 1L5 0H24L28 4V20L25 22H5L1 18Z" fill="#241a22" />
                        <path d="M6 1H24L27 6H8Z" fill="#a5569a" /><path d="M7 9H27V13H7Z" fill="#2a3fc0" /><path d="M7 16H27V20H7Z" fill="#2f9a3c" />
                        <path d="M1 3L7 5V8L1 5.5ZM1 9L7 11V14L1 11.5ZM1 15L7 17V20L1 17.5Z" fill="#f0e8ee" />
                        <path d="M15 0H20V22H16Z" fill="#8a6a3c" /><path d="M15 8H20V14H15Z" fill="#d9b65c" />
                    </Svg>
                </TaskButton>
                <TaskButton $open aria-label="直播">
                    <Svg s={28} stroke="none">
                        <rect x="1" width="26" height="27" rx="6" fill="#f78a1d" />
                        <path d="M8 8H13Q20 8 20 14T13 20H8ZM9.5 5.5L12 8.5M18 5.5L15 8.5" fill="#fff" stroke="#fff" strokeWidth="1.5" /><path d="M12 11Q16 11 16 14T12 17Z" fill="#f78a1d" />
                        <circle cx="23" cy="23" r="4.5" fill="#fff" /><path d="M22 20.5L25 23.5L22.5 25.5" fill="#2a7de0" />
                    </Svg>
                </TaskButton>
                <TaskButton $active aria-label="Word">
                    <Svg w={28} h={26} stroke="none">
                        <path d="M7 0H28V7H7Z" fill="#41a5ee" /><path d="M7 6.5H28V13H7Z" fill="#2b7cd3" /><path d="M7 13H28V19.5H7Z" fill="#185abd" /><path d="M7 19.5H28V26H7Z" fill="#103f91" />
                        <rect y="6" width="14" height="14" rx="1" fill="#1c5cc0" /><path d="M3 9.5L5 16.5L7 10.5L9 16.5L11 9.5" fill="none" stroke="#fff" strokeWidth="1.6" />
                    </Svg>
                </TaskButton>
                <ImeTray $cell="24px">
                    <button><ModeBadge>M</ModeBadge></button>
                    <button>中</button>
                    <button aria-label="半角"><Svg s={17} strokeWidth="1.3"><path d="M7 1Q15 3 14.5 9T7 16Q4 16 2 13.5Q10 11 7 1Z" /></Svg></button>
                    <button aria-label="中文标点"><Svg s={17} stroke="none"><circle cx="4" cy="4" r="2.2" stroke="#fff" strokeWidth="1.2" /><path d="M10 8H15V12Q14.5 15 11 16Q13 14 12.5 12.5H10Z" fill="#fff" /></Svg></button>
                    <button>简</button>
                    <button aria-label="设置"><Svg s={18} strokeWidth="1.3"><circle cx="9" cy="9" r="2.6" /><circle cx="9" cy="9" r="6" /><circle cx="9" cy="9" r="7.5" strokeDasharray="3 2.9" /></Svg></button>
                </ImeTray>
                <People aria-label="人脉"><Svg s={19} strokeWidth="1.4"><circle cx="5" cy="9" r="3" /><circle cx="14" cy="4" r="3" /><path d="M1 18Q1 12.5 5 12.5T9 18M10 11Q10.5 8 14 8T18 13" /></Svg></People>
                <TrayGroup $cell="29px">
                    <button aria-label="显示隐藏的图标"><Chevron up s={15} strokeWidth="1.1" /></button>
                    <button aria-label="音量"><Svg w={20} h={16} strokeWidth="1.3"><path d="M1 5.5H4L8 1.5V14.5L4 10.5H1ZM11 5.5Q12.5 8 11 10.5M13.5 3.5Q16.5 8 13.5 12.5" /><path d="M16.5 1.5Q20.5 8 16.5 14.5" stroke="#777" /></Svg></button>
                    <button aria-label="输入法状态"><Svg w={20} h={20} strokeWidth="1.4"><path d="M1 3L18 1V18L1 16ZM5 8Q7 4 11 6.5V4M11 11Q8 14 5 11.5" /><circle cx="14" cy="14" r="5.5" fill="#e0242c" stroke="none" /><path d="M14 11V15M14 16V17.5" /></Svg></button>
                    <button aria-label="网络"><Svg w={20} h={18} strokeWidth="1.4"><path d="M5 3H19V13H5V8M1 1H6V6H1ZM12 13V17M8 17H16" /></Svg></button>
                </TrayGroup>
                <Clock>10:08<br />2022/10/25</Clock>
                <Notify aria-label="通知">
                    <Svg w={30} h={30} stroke="none">
                        <path d="M0 2H19V17H9L5 21V17H0Z" fill="#fff" /><path d="M3 6H16M3 9.5H16M3 13H11" stroke="#2b2a27" strokeWidth="1.3" />
                        <circle cx="19" cy="20" r="9" fill="#2d3335" stroke="#9aa0a3" strokeWidth="1.3" />
                        <text x="19" y="25" textAnchor="middle" fontSize="14" fontWeight="600" fill="#fff">9</text>
                    </Svg>
                </Notify>
            </Taskbar>
        </Desktop>
    )
}

export default App
